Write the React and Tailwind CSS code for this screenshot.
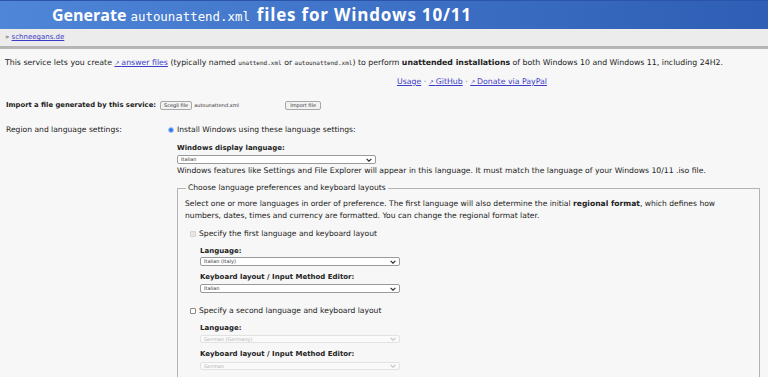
import React from "react";

const Chevron = ({ light }) => (
  <svg width="6" height="4" viewBox="0 0 10 6" className="shrink-0">
    <path
      d="M1 1 L5 5 L9 1"
      fill="none"
      stroke={light ? "#c8c8c8" : "#333"}
      strokeWidth="2"
    />
  </svg>
);

function Select({ value, width, disabled }) {
  return (
    <div
      className={`flex items-center justify-between rounded-[2px] border px-[3px] ${width} ${
        disabled
          ? "h-[8px] border-[#e2e2e2] bg-[#fafafa] text-[#b4b4b4]"
          : "h-[9px] border-[#9a9a9a] bg-white text-[#333]"
      }`}
    >
      <span className="text-[5px] leading-none">{value}</span>
      <Chevron light={disabled} />
    </div>
  );
}

function Label({ children, className = "", size = "text-[7px]" }) {
  return (
    <div className={`whitespace-nowrap font-bold leading-[12px] text-[#222] ${size} ${className}`}>
      {children}
    </div>
  );
}

const Ext = () => <span className="text-[6px]">↗ </span>;
const mono = { fontFamily: '"DejaVu Sans Mono", monospace' };

export default function App() {
  return (
    <div
      className="min-h-[377px] w-full overflow-hidden bg-[#f7f7f7] text-[7.6px] leading-[12px] text-[#222]"
      style={{ fontFamily: '"DejaVu Sans", Verdana, sans-serif' }}
    >
      {/* header */}
      <div className="h-[29px] border-t border-[#2a55a8] bg-gradient-to-r from-[#4f86d8] to-[#2e5eb5] pl-[52px]">
        <h1
          className="whitespace-nowrap text-[16px] font-bold leading-[27px] text-white"
          style={{ fontFamily: '"Open Sans", sans-serif' }}
        >
          Generate{" "}
          <code className="text-[12.4px] font-normal" style={mono}>
            autounattend.xml
          </code>
          <span className="ml-[7px] text-[17px] tracking-[0.8px]">files for Windows 10/11</span>
        </h1>
      </div>
      <div className="h-[20px] border-b-[3px] border-[#b5b5b5] bg-[#ececec] pl-[5px] text-[7px] leading-[17px]">
        <span className="text-[#555]">» </span>
        <a className="text-[#3c3cc8] underline">schneegans.de</a>
      </div>

      <p className="mt-[8px] whitespace-nowrap pl-[5px] text-[7.8px]">
        This service lets you create{" "}
        <a className="text-[#3c3cc8] underline">
          <Ext />
          answer files
        </a>{" "}
        (typically named{" "}
        <code className="text-[6px]" style={mono}>
          unattend.xml
        </code>{" "}
        or{" "}
        <code className="text-[6px]" style={mono}>
          autounattend.xml
        </code>
        ) to perform <b>unattended installations</b> of both Windows 10 and
        Windows 11, including 24H2.
      </p>

      <div className="mt-[7px] whitespace-nowrap pl-[397px] text-[7.8px] text-[#3c3cc8]">
        <a className="underline">Usage</a>
        <span className="text-[#666]"> · </span>
        <a className="underline">
          <Ext />
          GitHub
        </a>
        <span className="text-[#666]"> · </span>
        <a className="underline">
          <Ext />
          Donate via PayPal
        </a>
      </div>

      {/* import */}
      <div className="mt-[11px] flex items-center pl-[6px]">
        <Label className="w-[154px]" size="text-[6.8px]">
          Import a file generated by this service:
        </Label>
        <button className="h-[9px] rounded-[2px] border border-[#a8a8a8] bg-[#f2f2f2] px-[3px] text-[5px] leading-none text-[#333]">
          Scegli file
        </button>
        <span className="ml-[2px] w-[91px] text-[5px] text-[#333]">autounattend.xml</span>
        <button className="h-[9px] rounded-[2px] border border-[#a8a8a8] bg-[#f2f2f2] px-[4px] text-[5px] leading-none text-[#333]">
          Import file
        </button>
      </div>

      {/* region */}
      <div className="mt-[13px] grid grid-cols-[162px_1fr] pl-[6px] pr-[8px]">
        <div className="whitespace-nowrap leading-[12px]">Region and language settings:</div>
        <div>
          <div className="flex items-center">
            <span className="mr-[3px] box-content h-[4px] w-[4px] rounded-full border border-[#a9c8f5] bg-[#2f7ae5]" />
            <span>Install Windows using these language settings:</span>
          </div>
          <div className="pl-[9px]">
            <Label className="mt-[6px]">Windows display language:</Label>
            <div className="mt-[1px]">
              <Select value="Italian" width="w-[199px]" />
            </div>
            <div className="mt-[1px] whitespace-nowrap text-[7.7px]">
              Windows features like Settings and File Explorer will appear in
              this language. It must match the language of your Windows 10/11
              .iso file.
            </div>

            <fieldset className="mt-[5px] border border-[#b4b4b4] pb-[12px] pl-[7px] pr-[8px]">
              <legend className="ml-[1px] px-[2px] leading-[12px]">
                Choose language preferences and keyboard layouts
              </legend>
              <p className="mt-[4px]">
                Select one or more languages in order of preference. The first
                language will also determine the initial{" "}
                <b>regional format</b>, which defines how
                <br />
                numbers, dates, times and currency are formatted. You can
                change the regional format later.
              </p>

              <div className="mt-[6px] flex items-center pl-[5px]">
                <span className="mr-[3px] h-[6px] w-[6px] rounded-[1px] border border-[#d4d4d4] bg-[#e6e6e6]" />
                <span>Specify the first language and keyboard layout</span>
              </div>
              <div className="pl-[15px]">
                <Label className="mt-[5px]">Language:</Label>
                <Select value="Italian (Italy)" width="w-[200px]" />
                <Label className="mt-[5px]">Keyboard layout / Input Method Editor:</Label>
                <div className="mt-[1px]">
                  <Select value="Italian" width="w-[200px]" />
                </div>
              </div>

              <div className="mt-[12px] flex items-center pl-[5px]">
                <span className="mr-[3px] h-[6px] w-[6px] rounded-[1px] border border-[#8a8a8a] bg-white" />
                <span>Specify a second language and keyboard layout</span>
              </div>
              <div className="pl-[15px]">
                <Label className="mt-[5px]">Language:</Label>
                <div className="mt-[1px]">
                  <Select value="German (Germany)" width="w-[200px]" disabled />
                </div>
                <Label className="mt-[5px]">Keyboard layout / Input Method Editor:</Label>
                <div className="mt-[2px]">
                  <Select value="German" width="w-[200px]" disabled />
                </div>
              </div>
            </fieldset>
          </div>
        </div>
      </div>
    </div>
  );
}
